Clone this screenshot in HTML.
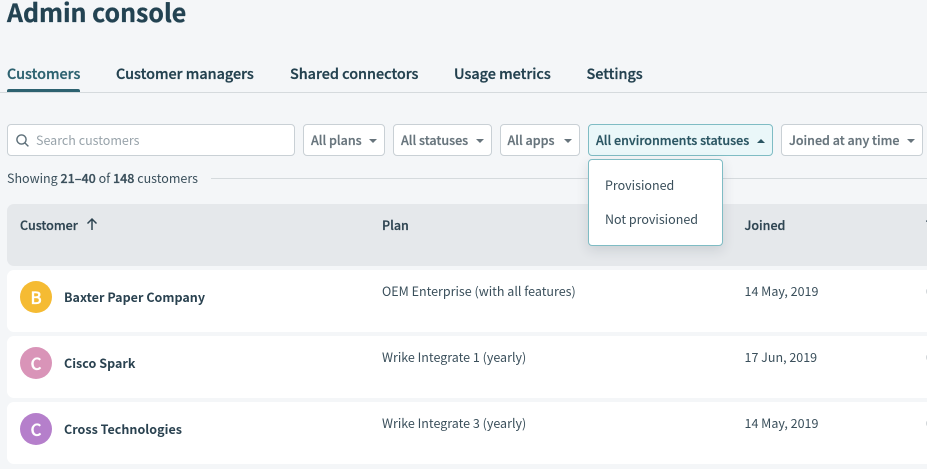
<!DOCTYPE html>
<html>
<head>
<meta charset="utf-8">
<style>
html,body{margin:0;padding:0;}
body{width:927px;height:469px;overflow:hidden;background:#f4f6f8;position:relative;font-family:"Noto Sans CJK SC","Liberation Sans",sans-serif;color:#2a4250;}
.a{position:absolute;}
.t{position:absolute;white-space:nowrap;line-height:20px;height:20px;}
.tab{font-size:14.4px;font-weight:500;color:#23414f;top:64px;-webkit-text-stroke:.3px currentColor;}
.btn{position:absolute;top:124px;height:30px;background:#fff;border:1px solid #c9d0d5;border-radius:4px;}
.bt{font-size:12.5px;font-weight:500;color:#67747c;top:130px;-webkit-text-stroke:.25px currentColor;}
.car{position:absolute;width:0;height:0;border-left:4px solid transparent;border-right:4px solid transparent;border-top:4px solid #67747c;top:139px;}
.row{position:absolute;left:7px;width:930px;height:62px;background:#fff;border-radius:7px;}
.av{position:absolute;left:20px;width:32px;height:32px;border-radius:50%;color:#fff;font-size:17px;font-weight:500;text-align:center;line-height:32px;-webkit-text-stroke:.3px #fff;}
.nm{font-size:12.5px;font-weight:700;color:#2a4250;left:64px;letter-spacing:.03px;}
.c{font-size:12.5px;color:#3a4f5b;}
.h{font-size:12.5px;font-weight:500;color:#2f4552;top:215px;-webkit-text-stroke:.25px currentColor;}
</style>
</head>
<body>
<div class="t" style="left:7px;top:-1px;font-size:24.9px;font-weight:700;color:#234352;line-height:26px;height:26px;-webkit-text-stroke:.3px #234352;">Admin console</div>

<div class="t tab" style="left:7px;color:#2d6270;">Customers</div>
<div class="t tab" style="left:116px;">Customer managers</div>
<div class="t tab" style="left:290px;">Shared connectors</div>
<div class="t tab" style="left:454px;">Usage metrics</div>
<div class="t tab" style="left:586.5px;">Settings</div>
<div class="a" style="left:0;top:92px;width:927px;height:1px;background:#d5dadd;"></div>
<div class="a" style="left:7px;top:89px;width:73px;height:3px;background:#2d6270;border-radius:2px 2px 0 0;"></div>

<div class="btn" style="left:7px;width:286px;"></div>
<svg class="a" style="left:15px;top:133px;" width="15" height="15" viewBox="0 0 15 15" fill="none" stroke="#5c6e78" stroke-width="1.4"><circle cx="6.5" cy="6.5" r="4.6"/><path d="M10 10l3.4 3.4"/></svg>
<div class="t" style="left:36px;top:130px;font-size:12.5px;color:#98a3aa;">Search customers</div>

<div class="btn" style="left:303px;width:80px;"></div>
<div class="t bt" style="left:311px;">All plans</div>
<div class="car" style="left:369px;"></div>

<div class="btn" style="left:393px;width:97px;"></div>
<div class="t bt" style="left:401px;">All statuses</div>
<div class="car" style="left:476px;"></div>

<div class="btn" style="left:500px;width:78px;"></div>
<div class="t bt" style="left:507.5px;">All apps</div>
<div class="car" style="left:564px;"></div>

<div class="btn" style="left:588px;width:183px;background:#eaf7f9;border-color:#7fbcc4;"></div>
<div class="t bt" style="left:596px;color:#2a5562;">All environments statuses</div>
<div class="car" style="left:757px;border-top:0;border-bottom:4px solid #2a5562;"></div>

<div class="btn" style="left:781px;width:140px;"></div>
<div class="t bt" style="left:789px;">Joined at any time</div>
<div class="car" style="left:907px;"></div>

<div class="t" style="left:7px;top:168px;font-size:12.5px;color:#3a4f5b;">Showing <b style="font-weight:500;-webkit-text-stroke:.25px currentColor;">21–40</b> of <b style="font-weight:500;-webkit-text-stroke:.25px currentColor;">148</b> customers</div>
<div class="a" style="left:211px;top:178px;width:716px;height:1px;background:#d5dadd;"></div>

<div class="a" style="left:7px;top:204px;width:930px;height:62px;background:#e5e8eb;border-radius:7px;"></div>
<div class="t h" style="left:20px;">Customer</div>
<svg class="a" style="left:85px;top:217px;" width="14" height="14" viewBox="0 0 14 14" fill="none" stroke="#2f4552" stroke-width="1.5"><path d="M7 13V2M2.5 6.5L7 2l4.5 4.5"/></svg>
<div class="t h" style="left:382px;">Plan</div>
<div class="t h" style="left:744.5px;">Joined</div>
<div class="t h" style="left:926px;">T</div>

<div class="row" style="top:270px;"></div>
<div class="av" style="top:281px;background:#f5bb33;">B</div>
<div class="t nm" style="top:287px;">Baxter Paper Company</div>
<div class="t c" style="left:382px;top:281px;">OEM Enterprise (with all features)</div>
<div class="t c" style="left:744.5px;top:281px;">14 May, 2019</div>
<div class="t c" style="left:926px;top:281px;color:#8a969d;">0</div>

<div class="row" style="top:336px;"></div>
<div class="av" style="top:347px;background:#d994b8;">C</div>
<div class="t nm" style="top:353px;">Cisco Spark</div>
<div class="t c" style="left:382px;top:347px;">Wrike Integrate 1 (yearly)</div>
<div class="t c" style="left:744.5px;top:347px;">17 Jun, 2019</div>
<div class="t c" style="left:926px;top:347px;color:#8a969d;">0</div>

<div class="row" style="top:402px;"></div>
<div class="av" style="top:413px;background:#b57fcb;">C</div>
<div class="t nm" style="top:419px;">Cross Technologies</div>
<div class="t c" style="left:382px;top:413px;">Wrike Integrate 3 (yearly)</div>
<div class="t c" style="left:744.5px;top:413px;">14 May, 2019</div>
<div class="t c" style="left:926px;top:413px;color:#8a969d;">0</div>

<div class="a" style="left:588px;top:159px;width:133px;height:85px;background:#fff;border:1px solid #7fbcc4;border-radius:4px;box-shadow:0 4px 12px rgba(40,60,70,.14);"></div>
<div class="t" style="left:605px;top:175px;font-size:12.5px;color:#3a4f5b;">Provisioned</div>
<div class="t" style="left:605px;top:209px;font-size:12.5px;color:#3a4f5b;">Not provisioned</div>
</body>
</html>
